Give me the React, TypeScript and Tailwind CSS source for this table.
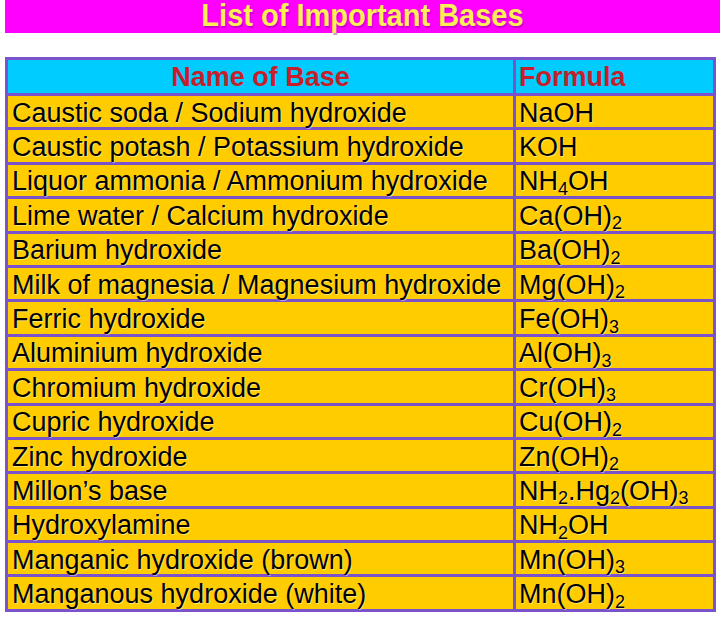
const rows: [string, React.ReactNode][] = [
  ["Caustic soda / Sodium hydroxide", "NaOH"],
  ["Caustic potash / Potassium hydroxide", "KOH"],
  ["Liquor ammonia / Ammonium hydroxide", <>NH<sub>4</sub>OH</>],
  ["Lime water / Calcium hydroxide", <>Ca(OH)<sub>2</sub></>],
  ["Barium hydroxide", <>Ba(OH)<sub>2</sub></>],
  ["Milk of magnesia / Magnesium hydroxide", <>Mg(OH)<sub>2</sub></>],
  ["Ferric hydroxide", <>Fe(OH)<sub>3</sub></>],
  ["Aluminium hydroxide", <>Al(OH)<sub>3</sub></>],
  ["Chromium hydroxide", <>Cr(OH)<sub>3</sub></>],
  ["Cupric hydroxide", <>Cu(OH)<sub>2</sub></>],
  ["Zinc hydroxide", <>Zn(OH)<sub>2</sub></>],
  ["Millon’s base", <>NH<sub>2</sub>.Hg<sub>2</sub>(OH)<sub>3</sub></>],
  ["Hydroxylamine", <>NH<sub>2</sub>OH</>],
  ["Manganic hydroxide (brown)", <>Mn(OH)<sub>3</sub></>],
  ["Manganous hydroxide (white)", <>Mn(OH)<sub>2</sub></>],
];

export default function App() {
  return (
    <div className="w-[720px] h-[623px] bg-white font-['Liberation_Sans',Arial,sans-serif]">
      {/* Title bar */}
      <div className="ml-[5px] h-[33px] bg-[#ff00ff] flex items-center justify-center">
        <h1 className="text-[29px] leading-none font-bold text-[#ffee55] scale-y-105 [text-shadow:1px_1px_1px_rgba(120,0,120,0.4)]">
          List of Important Bases
        </h1>
      </div>

      {/* Table */}
      <div className="mt-[24px] ml-[5px] w-[711px] bg-[#7a52cc] p-[3px] grid grid-cols-[505px_197px] gap-[3px] text-[27px] leading-none">
        <div className="h-[33px] bg-[#00ccff] flex items-center justify-center pt-[2px] font-bold text-[#c41f2a]">
          Name of Base
        </div>
        <div className="h-[33px] bg-[#00ccff] flex items-center pl-[3px] pt-[2px] font-bold text-[#c41f2a]">
          Formula
        </div>
        {rows.map(([name, formula]) => (
          <>
            <div
              key={name + "-n"}
              className="h-[31.4px] bg-[#ffcc00] flex items-center pl-[4px] pt-[3px] text-black [text-shadow:1px_1px_0_rgba(255,255,255,0.45)] whitespace-nowrap"
            >
              {name}
            </div>
            <div
              key={name + "-f"}
              className="h-[31.4px] bg-[#ffcc00] flex items-center pl-[3px] pt-[3px] text-black [text-shadow:1px_1px_0_rgba(255,255,255,0.45)] whitespace-nowrap [&_sub]:text-[18px]"
            >
              <span>{formula}</span>
            </div>
          </>
        ))}
      </div>
    </div>
  );
}
